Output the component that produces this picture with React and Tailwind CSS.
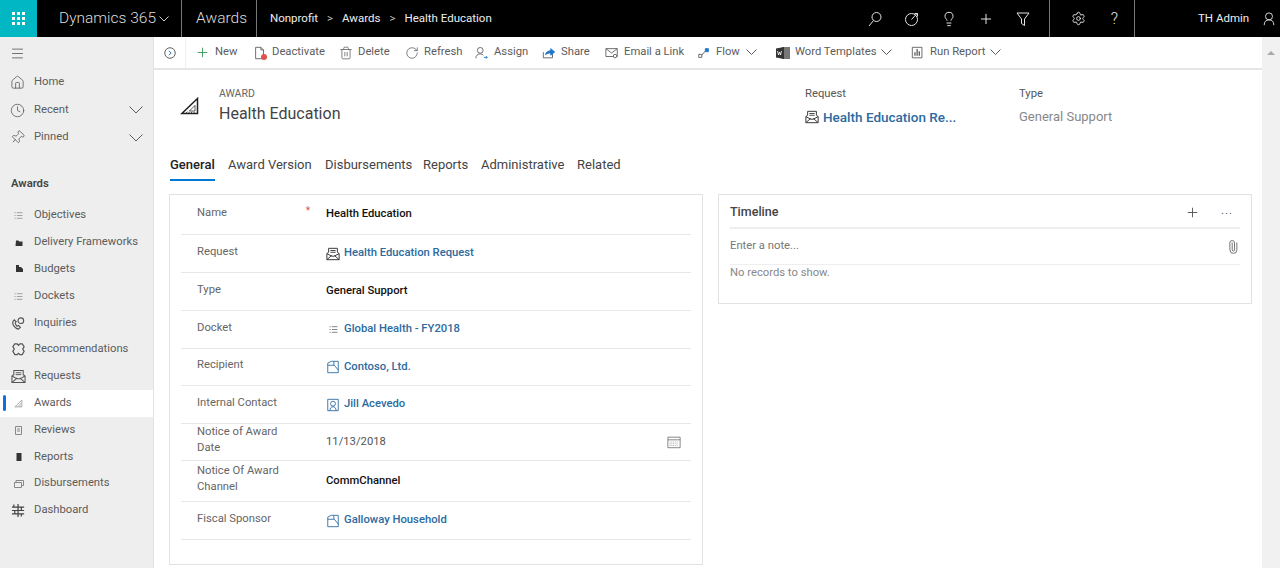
import { Plus, Lightbulb, Settings, Home, Clock, Pin, Paperclip, RotateCw, Trash2, Menu } from "lucide-react";

function Svg({ size = 16, children, className = "", vb = 16 }) {
  return (
    <svg width={size} height={size} viewBox={`0 0 ${vb} ${vb}`} fill="none" stroke="currentColor" strokeWidth="1" className={`shrink-0 ${className}`}>
      {children}
    </svg>
  );
}

const Chevron = ({ w = 12, className = "" }) => (
  <svg width={w} height={w / 2 + 1} viewBox={`0 0 ${w} ${w / 2 + 1}`} fill="none" stroke="currentColor" strokeWidth="1" className={`shrink-0 ${className}`}>
    <path d={`M.5 .5L${w / 2} ${w / 2}L${w - 0.5} .5`} />
  </svg>
);

const Triangle = ({ size = 16, className }) => (
  <Svg size={size} className={className}>
    <path d="M14 2v12H1.500z" strokeWidth="1.200" />
    <path d="M12 7.500v4.500H7.500z" strokeWidth=".6" />
    <path d="M5 13.500l1-1M7 13.500l.6-.8M9 13.500l.6-.8M11 13.500l.6-.8" strokeWidth=".7" />
  </Svg>
);
const Mail = ({ size = 16, className }) => (
  <Svg size={size} className={className}>
    <path d="M1 7.500V14.500H15V7.500L13 6V1.500H3V6z" strokeWidth="1.100" />
    <path d="M1 14.500L6.500 9.500M15 14.500L9.500 9.500M1 7.500L6.500 10.500H9.500L15 7.500" strokeWidth="1.100" />
    <path d="M5 4H11M5 6H11" strokeWidth="1" />
  </Svg>
);
const AccountIcon = () => (
  <Svg size={14} className="text-[#2c6aa0]">
    <path d="M2 3.500L6 1.500H14V14.500H2z" />
    <path d="M2 6H9.500L14 11.500M9 1.500V6" />
  </Svg>
);
const ContactIcon = () => (
  <Svg size={14} className="text-[#2c6aa0]">
    <path d="M2 1.500H14V14.500H2z" />
    <circle cx="8" cy="6.500" r="2.800" />
    <path d="M4.500 14.500c0-3 1.500-4.500 3.500-4.500s3.500 1.500 3.500 4.500" />
  </Svg>
);
const ListIcon = ({ className = "" }) => (
  <Svg size={9} className={className}>
    <path d="M1 3h2M1 8h2M1 13h2M5 3h10M5 8h10M5 13h10" strokeWidth="1.600" />
  </Svg>
);
const Blob = ({ d }) => (
  <svg width="8" height="8" viewBox="0 0 8 8" className="shrink-0 text-[#333]" fill="currentColor"><path d={d} /></svg>
);

const navTop = [
  { label: "Home", icon: <Home size={15} strokeWidth={1.300} /> },
  { label: "Recent", icon: <Clock size={15} strokeWidth={1.300} />, chevron: true },
  { label: "Pinned", icon: <Pin size={15} strokeWidth={1.300} className="rotate-45" />, chevron: true },
];

const navAwards = [
  { label: "Objectives", icon: <ListIcon className="text-[#999]" /> },
  { label: "Delivery Frameworks", icon: <Blob d="M1 1.500h2.500l.5 1h3.500v4.500H0.500z" /> },
  { label: "Budgets", icon: <Blob d="M1 0h3v2h2l2 2v3H1z" /> },
  { label: "Dockets", icon: <ListIcon className="text-[#999]" /> },
  { label: "Inquiries", icon: (
    <Svg size={15}>
      <circle cx="10.500" cy="5" r="3" strokeWidth="1.200" />
      <path d="M2 6c-1 3 2 7 6 8l2-2-2-2-1.500 1C5.500 10 4.500 8.500 4.500 7.500L5.500 6 3.500 4z" strokeWidth="1.200" />
    </Svg>
  ) },
  { label: "Recommendations", icon: (
    <Svg size={15}>
      <path d="M4 2h2.500l1.500 1.500L9.500 2H12l2 3-1.500 2.500L14 10l-2 3.500H9.500L8 12l-1.500 1.500H4L2 10l1.500-2.500L2 5z" strokeWidth="1.300" />
    </Svg>
  ) },
  { label: "Requests", icon: <Mail size={15} /> },
  { label: "Awards", icon: <Triangle size={9} className="text-[#888]" />, active: true },
  { label: "Reviews", icon: (
    <Svg size={9} className="text-[#888]" vb={9}>
      <path d="M1.500.5h6v8h-6zM3 3h3M3 5h3" />
    </Svg>
  ) },
  { label: "Reports", icon: <Blob d="M1.500 0h5v8h-5z" /> },
  { label: "Disbursements", icon: (
    <Svg size={10} className="text-[#888]" vb={10}>
      <path d="M.5 3.500h7v5h-7zM2 3.500V1.500h7.500v5H7.500" />
    </Svg>
  ) },
  { label: "Dashboard", icon: (
    <Svg size={15} className="text-[#444]">
      <path d="M7.500 1v14M1 4.500h13M1 8h13M1 11.500h13M3 1.500v3M11 4.500v3.500M4 8v3.500M11 11.500v3" strokeWidth="1.300" />
    </Svg>
  ) },
];

const commands = [
  { label: "New", w: "w-[58px]", icon: <Plus size={15} strokeWidth={1.500} className="text-[#3f9b62]" /> },
  { label: "Deactivate", w: "w-[86px]", icon: (
    <span className="relative flex">
      <Svg size={14}><path d="M3 1.500h6l3 3V14.500H3zM9 1.500v3h3" /></Svg>
      <span className="absolute right-0 bottom-0 w-[6px] h-[6px] rounded-full bg-[#e0534a]" />
    </span>
  ) },
  { label: "Delete", w: "w-[66px]", icon: <Trash2 size={14} strokeWidth={1.300} /> },
  { label: "Refresh", w: "w-[70px]", icon: <RotateCw size={14} strokeWidth={1.300} /> },
  { label: "Assign", w: "w-[67px]", icon: (
    <Svg size={14}>
      <circle cx="6" cy="5" r="3.300" />
      <path d="M1 14c0-3 2-5 5-5 1.500 0 2.500.5 3.500 1.500" />
      <path d="M10 13h4M12.500 11.500L14 13l-1.500 1.500" stroke="#1f77c9" />
    </Svg>
  ) },
  { label: "Share", w: "w-[63px]", icon: (
    <Svg size={14}>
      <path d="M1.500 7v6.500H12V9" />
      <path d="M4 10c.5-3 3-4.500 6-4.500V3l4.500 3.800L10 10.500V8c-2.500 0-4.500.5-6 2z" fill="#1f77c9" stroke="#1f77c9" />
    </Svg>
  ) },
  { label: "Email a Link", w: "w-[92px]", icon: (
    <Svg size={14}>
      <path d="M1 3h13v9H1zM1 3l6.500 5L14 3" />
      <circle cx="11.500" cy="11.500" r="2" fill="#fff" />
    </Svg>
  ) },
  { label: "Flow", w: "w-[49px]", icon: (
    <Svg size={14}>
      <path d="M2 9.500h3.500v3.500H2zM5.500 10.500L10 5" />
      <path d="M9.500 3h3.500v3.500H9.500z" fill="#1f77c9" stroke="#1f77c9" />
    </Svg>
  ), chevron: true, cw: "w-[30px]" },
  { label: "Word Templates", w: "w-[105px]", icon: (
    <svg width="14" height="14" viewBox="0 0 14 14" className="shrink-0">
      <path d="M6 1h8v12H6z" fill="#777" />
      <path d="M0 2.500l8-1.500v12l-8-1.500z" fill="#333" />
      <path d="M1.500 5l1 4 1-3 1 3 1-4" stroke="#fff" strokeWidth=".8" fill="none" />
    </svg>
  ), chevron: true, cw: "w-[30px]" },
  { label: "Run Report", w: "w-[79px]", icon: (
    <Svg size={14}>
      <path d="M1.500 1.500h11v12h-11z" />
      <path d="M4.500 11V7M7 11V3.500M9.500 11V6" strokeWidth="1.500" />
    </Svg>
  ), chevron: true, cw: "w-[30px]" },
];

const rows = [
  { label: "Name", h: "h-[40px]", required: true, value: "Health Education" },
  { label: "Request", h: "h-[38px]", link: "Health Education Request", icon: <Mail size={14} className="text-[#333]" /> },
  { label: "Type", h: "h-[38px]", value: "General Support" },
  { label: "Docket", h: "h-[38px]", link: "Global Health - FY2018", icon: <span className="w-[14px] flex justify-center"><ListIcon className="text-[#777]" /></span> },
  { label: "Recipient", h: "h-[37px]", link: "Contoso, Ltd.", icon: <AccountIcon /> },
  { label: "Internal Contact", h: "h-[38px]", link: "Jill Acevedo", icon: <ContactIcon /> },
  { label: "Notice of Award Date", h: "h-[37px]", date: "11/13/2018" },
  { label: "Notice Of Award Channel", h: "h-[41px]", value: "CommChannel" },
  { label: "Fiscal Sponsor", h: "h-[38px]", link: "Galloway Household", icon: <AccountIcon /> },
];

const tabs = [
  { label: "General", w: "w-[58px]", active: true },
  { label: "Award Version", w: "w-[97px]" },
  { label: "Disbursements", w: "w-[98px]" },
  { label: "Reports", w: "w-[58px]" },
  { label: "Administrative", w: "w-[96px]" },
  { label: "Related", w: "w-[50px]" },
];

function TopBar() {
  return (
    <header className="h-[37px] bg-black text-white flex items-center shrink-0">
      <div className="w-[37px] h-full bg-[#00b7c3] grid grid-cols-3 gap-[2px] content-center justify-center px-[12px]">
        {Array.from({ length: 9 }).map((_, i) => <span key={i} className="w-[3px] h-[3px] bg-white" />)}
      </div>
      <div className="w-[145px] h-full flex items-center pl-[22px] border-r border-[#777]">
        <span className="w-[100px] text-[15.500px] font-light text-[#ddd] whitespace-nowrap">Dynamics 365</span>
        <Chevron w={10} className="text-[#ccc]" />
      </div>
      <div className="w-[75px] h-full flex items-center pl-[14px] border-r border-[#777] text-[15.500px] font-light text-[#ddd]">Awards</div>
      <nav className="flex items-center text-[11.500px] pl-[13px] text-[#eee]">
        <span>Nonprofit</span>
        <span className="mx-[9px] font-light">&gt;</span>
        <span>Awards</span>
        <span className="mx-[9px] font-light">&gt;</span>
        <span>Health Education</span>
      </nav>
      <div className="ml-auto flex items-center h-full text-[#e4e4e4]">
        <div className="flex items-center gap-[21px] pr-[18px] h-full border-r border-[#777]">
          <Svg size={16}><circle cx="9.500" cy="6" r="4.500" /><path d="M6.500 9.500L2 15" /></Svg>
          <Svg size={16}><circle cx="7.500" cy="8.500" r="6" /><path d="M7.500 8.500L13 2.500M10.500 2.500h3v3" /></Svg>
          <Lightbulb size={16} strokeWidth={1.500} />
          <Plus size={16} strokeWidth={1.500} />
          <Svg size={16}><path d="M2 2h12L9.500 8v6.500L6.500 12.500V8z" /></Svg>
        </div>
        <div className="flex items-center gap-[21px] pl-[21px] pr-[12px] h-full border-r border-[#777]">
          <Settings size={15} strokeWidth={1.500} />
          <span className="w-[15px] text-center text-[16px] font-light">?</span>
        </div>
        <div className="w-[145px] flex items-center pl-[63px] text-[11.500px] text-[#eee]">
          <span>TH Admin</span>
          <Svg size={14} className="ml-[13px]"><circle cx="8" cy="5" r="4" /><path d="M2.500 15c0-4 2-6 5.500-6s5.500 2 5.500 6" /></Svg>
        </div>
      </div>
    </header>
  );
}

function NavRow({ item }) {
  return (
    <div className={`h-[26.800px] flex items-center text-[#5c5c5c] ${item.active ? "bg-white" : ""}`}>
      <span className={`w-[3px] h-[16px] rounded-full ml-[3px] ${item.active ? "bg-[#0f6fe0]" : ""}`} />
      <span className="w-[25px] flex justify-center items-center text-[#555]">{item.icon}</span>
      <span className="ml-[3px] whitespace-nowrap">{item.label}</span>
    </div>
  );
}

function Sidebar() {
  return (
    <aside className="w-[154px] shrink-0 bg-[#eeeeee] border-r border-[#e2e2e2] text-[11.250px]">
      <div className="h-[32px] flex items-center pl-[10px] text-[#555]"><Menu size={15} strokeWidth={1.300} /></div>
      <div>
        {navTop.map((item) => (
          <div key={item.label} className="h-[27.500px] flex items-center text-[#5c5c5c]">
            <span className="w-[28px] flex justify-center ml-[3px]">{item.icon}</span>
            <span className="ml-[3px]">{item.label}</span>
            {item.chevron && <Chevron w={14} className="ml-auto mr-[10px]" />}
          </div>
        ))}
      </div>
      <div className="pl-[11px] mt-[23px] h-[20px] font-semibold text-[#444] flex items-center">Awards</div>
      <div className="mt-[8px]">
        {navAwards.map((item) => <NavRow key={item.label} item={item} />)}
      </div>
    </aside>
  );
}

function CommandBar() {
  return (
    <div className="h-[33px] shrink-0 bg-white border-b-2 border-[#e6e6e6] flex items-center text-[11.250px] text-[#5c5c5c]">
      <div className="w-[32px] h-full flex items-center justify-center border-r border-[#f0f0f0]">
        <Svg size={12}><circle cx="8" cy="8" r="7" strokeWidth="1.300" /><path d="M6.500 5L9.500 8L6.500 11" strokeWidth="1.300" stroke="#2c6aa0" /></Svg>
      </div>
      <div className="flex items-center pl-[9px]">
        {commands.map((c) => (
          <div key={c.label} className="flex items-center">
            <div className={`flex items-center gap-[5px] ${c.w}`}>
              {c.icon}
              <span className="whitespace-nowrap">{c.label}</span>
            </div>
            {c.chevron && (
              <div className={c.cw}><Chevron w={11} /></div>
            )}
          </div>
        ))}
      </div>
    </div>
  );
}

function FormRow({ row }) {
  return (
    <div className={`${row.h} flex items-center border-b border-[#e8e8e8]`}>
      <div className="w-[145px] pl-[16px] pr-[25px] text-[#666] mb-[4px] shrink-0 relative leading-[16px]">
        <span>{row.label}</span>
        {row.required && <span className="absolute right-[16px] top-[-2px] text-[#d9534f] text-[10px]">*</span>}
      </div>
      <div className="flex-1 flex items-center pr-[10px]">
        {row.value && <span className="font-medium text-[#111]">{row.value}</span>}
        {row.link && (
          <span className="flex items-center gap-[4px] font-medium text-[#2c6aa0]">
            {row.icon}
            {row.link}
          </span>
        )}
        {row.date && (
          <>
            <span className="text-[#555]">{row.date}</span>
            <Svg size={14} className="ml-auto text-[#777]">
              <path d="M1 2.500h14v12H1zM1 5.500h14" />
              <path d="M3 8h10M3 10h10M3 12h10" strokeWidth=".7" strokeDasharray="1 1" />
            </Svg>
          </>
        )}
      </div>
    </div>
  );
}

function Main() {
  return (
    <main className="flex-1 min-w-0 flex">
      <div className="flex-1 min-w-0 flex flex-col">
        <CommandBar />
        <div className="flex-1 overflow-hidden pl-[15px] pr-[10px]">
          {/* header */}
          <div className="flex items-start pt-[16px] h-[81px]">
            <div className="w-[50px] pl-[11px] pt-[10px] text-[#222]"><Triangle size={20} /></div>
            <div className="w-[586px]">
              <div className="text-[10.500px] leading-[16px] text-[#666]">AWARD</div>
              <div className="text-[16px] leading-[24px] text-[#444]">Health Education</div>
            </div>
            <div className="w-[214px] text-[11.250px] text-[#555]">
              <div className="leading-[16px]">Request</div>
              <div className="flex items-center gap-[4px] mt-[5px] text-[13.500px] leading-[20px] font-medium text-[#2c6aa0] whitespace-nowrap">
                <Mail size={14} className="text-[#333]" />
                Health Education Re...
              </div>
            </div>
            <div className="text-[11.250px] text-[#555]">
              <div className="leading-[16px]">Type</div>
              <div className="mt-[5px] text-[13px] leading-[20px] text-[#888] whitespace-nowrap">General Support</div>
            </div>
          </div>
          {/* tabs */}
          <div className="flex text-[13px] text-[#444] h-[30px] pl-[1px]">
            {tabs.map((t) => (
              <div key={t.label} className={`${t.w} whitespace-nowrap`}>
                <span className={`inline-block h-[30px] leading-[28px] ${t.active ? "font-medium text-[#222] border-b-2 border-[#0078d4]" : ""}`}>{t.label}</span>
              </div>
            ))}
          </div>
          <div className="flex items-start gap-[15px] mt-[13px] text-[11.250px]">
            {/* form */}
            <section className="w-[534px] h-[371px] border border-[#e2e2e2] px-[11px]">
              {rows.map((r) => <FormRow key={r.label} row={r} />)}
            </section>
            {/* timeline */}
            <section className="w-[534px] h-[110px] border border-[#e2e2e2] px-[11px]">
              <div className="h-[34px] pt-[3px] flex items-center border-b-2 border-[#eeeeee]">
                <span className="text-[12.500px] font-medium text-[#444]">Timeline</span>
                <Plus size={15} strokeWidth={1.500} className="ml-auto text-[#555]" />
                <span className="w-[14px] ml-[20px] mr-[6px] text-center text-[#555] tracking-[1px] leading-[8px] mb-[4px]">...</span>
              </div>
              <div className="h-[36px] flex items-center border-b border-[#eeeeee] text-[#777]">
                <span>Enter a note...</span>
                <Paperclip size={14} strokeWidth={1.300} className="ml-auto -rotate-45 text-[#555]" />
              </div>
              <div className="h-[16px] flex items-center text-[#888]">No records to show.</div>
            </section>
          </div>
        </div>
      </div>
      {/* scrollbar track */}
      <div className="w-[18px] shrink-0 bg-[#f1f1f1] flex justify-center pt-[14px]">
        <span className="w-0 h-0 border-x-[4px] border-x-transparent border-b-[4px] border-b-[#a8a8a8]" />
      </div>
    </main>
  );
}

export default function App() {
  return (
    <div className="w-[1280px] h-[568px] overflow-hidden flex flex-col bg-white font-['Roboto',sans-serif]">
      <TopBar />
      <div className="flex-1 min-h-0 flex">
        <Sidebar />
        <Main />
      </div>
    </div>
  );
}
